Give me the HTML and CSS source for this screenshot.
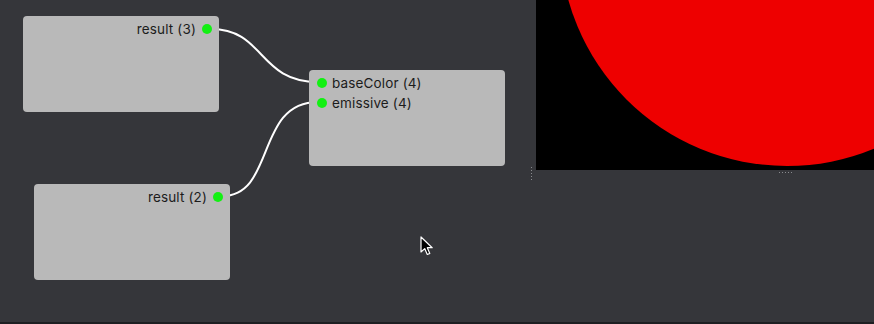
FILE: index.html
```html
<!DOCTYPE html>
<html lang="en">
<head>
    <meta charset="UTF-8">
    <title>Node Editor</title>
    <link rel="stylesheet" href="styles.css">
</head>
<body>
    <div class="editor">
        <svg class="wires" width="874" height="322" viewBox="0 0 874 322">
            <path d="M211 29 C 265 29, 258 82, 318 82" />
            <path d="M222 196 C 276 196, 255 102, 318 102" />
        </svg>

        <div class="node" style="left: 23px; top: 16px;">
            <div class="port out"><span>result (3)</span><i class="dot"></i></div>
        </div>

        <div class="node" style="left: 309px; top: 70px;">
            <div class="port in"><i class="dot"></i><span>baseColor (4)</span></div>
            <div class="port in"><i class="dot"></i><span>emissive (4)</span></div>
        </div>

        <div class="node" style="left: 34px; top: 184px;">
            <div class="port out"><span>result (2)</span><i class="dot"></i></div>
        </div>

        <div class="preview">
            <div class="sphere"></div>
        </div>
        <div class="grip grip-v"></div>
        <div class="grip grip-h"></div>

        <svg class="cursor" width="15" height="21" viewBox="0 0 15 21">
            <path d="M1 1 L1 16 L4.7 12.6 L7.3 18.5 L9.8 17.4 L7.3 11.7 L12.2 11.7 Z" />
        </svg>
    </div>
</body>
</html>
```

FILE: styles.css
```css
* { margin: 0; padding: 0; box-sizing: border-box; }

body {
    background: #1e1f22;
    font-family: Inter, "Liberation Sans", sans-serif;
    overflow: hidden;
}

.editor {
    position: relative;
    width: 874px;
    height: 322px;
    background: #35363a;
    overflow: hidden;
}

.wires {
    position: absolute;
    inset: 0;
    fill: none;
    stroke: #ffffff;
    stroke-width: 2;
}

.wires path { stroke-linecap: round; }

.node {
    position: absolute;
    width: 196px;
    height: 96px;
    background: #b9b9b9;
    border-radius: 4px;
    padding: 5px 7px;
    display: flex;
    flex-direction: column;
    gap: 4px;
}

.port {
    display: flex;
    align-items: center;
    gap: 6px;
    height: 16px;
    font-size: 13.5px;
    letter-spacing: 0.15px;
    color: #1c1c1c;
}

.port.out { justify-content: flex-end; gap: 6px; }
.port.in { padding-left: 1px; gap: 5px; }

.dot {
    width: 10px;
    height: 10px;
    border-radius: 50%;
    background: #13f013;
    flex-shrink: 0;
}

.preview {
    position: absolute;
    top: 0;
    right: 0;
    width: 338px;
    height: 170px;
    background: #000000;
    overflow: hidden;
}

.sphere {
    position: absolute;
    left: 24px;
    top: -288px;
    width: 454px;
    height: 454px;
    border-radius: 50%;
    background: #ee0000;
}

.grip {
    position: absolute;
    background-image: radial-gradient(circle, #8a8b8f 0.7px, transparent 0.8px);
    background-size: 3px 3px;
}

.grip-v { left: 530px; top: 166px; width: 3px; height: 15px; }
.grip-h { left: 778px; top: 171px; width: 15px; height: 3px; }

.cursor {
    position: absolute;
    left: 420px;
    top: 236px;
    fill: #000000;
    stroke: #ffffff;
    stroke-width: 1.2;
}

.cursor path { stroke-linejoin: round; }
```
